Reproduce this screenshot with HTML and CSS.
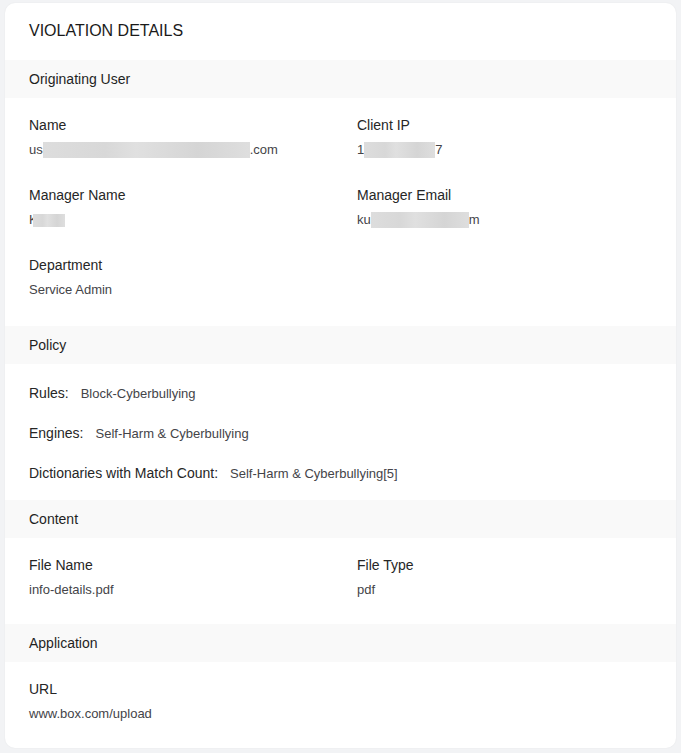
FILE: index.html
```html
<!DOCTYPE html>
<html>
<head>
<meta charset="utf-8">
<link rel="stylesheet" href="styles.css">
</head>
<body>
<div class="card">
  <div class="title">VIOLATION DETAILS</div>

  <div class="band">Originating User</div>
  <div class="section grid user">
    <div class="field">
      <div class="label">Name</div>
      <div class="value">us<span class="redact r-name"></span>.com</div>
    </div>
    <div class="field">
      <div class="label">Client IP</div>
      <div class="value">1<span class="redact r-ip"></span>7</div>
    </div>
    <div class="field">
      <div class="label">Manager Name</div>
      <div class="value">K<span class="redact r-mgr"></span></div>
    </div>
    <div class="field">
      <div class="label">Manager Email</div>
      <div class="value">ku<span class="redact r-mail"></span>m</div>
    </div>
    <div class="field">
      <div class="label">Department</div>
      <div class="value">Service Admin</div>
    </div>
  </div>

  <div class="band">Policy</div>
  <div class="section policy">
    <div class="prow"><span class="plabel">Rules:</span><span class="pvalue">Block-Cyberbullying</span></div>
    <div class="prow"><span class="plabel">Engines:</span><span class="pvalue">Self-Harm &amp; Cyberbullying</span></div>
    <div class="prow"><span class="plabel">Dictionaries with Match Count:</span><span class="pvalue">Self-Harm &amp; Cyberbullying[5]</span></div>
  </div>

  <div class="band">Content</div>
  <div class="section grid content">
    <div class="field">
      <div class="label">File Name</div>
      <div class="value">info-details.pdf</div>
    </div>
    <div class="field">
      <div class="label">File Type</div>
      <div class="value">pdf</div>
    </div>
  </div>

  <div class="band">Application</div>
  <div class="section grid app">
    <div class="field">
      <div class="label">URL</div>
      <div class="value">www.box.com/upload</div>
    </div>
  </div>
</div>
</body>
</html>
```

FILE: styles.css
```css
html, body {
  margin: 0;
  padding: 0;
  background: #f2f3f5;
}
body {
  padding: 3px 5px 5px 5px;
  font-family: Arial, "Liberation Sans", sans-serif;
}
.card {
  background: #ffffff;
  border-radius: 10px;
  overflow: hidden;
  box-shadow: 0 0 2px rgba(0,0,0,0.06);
}
.title {
  height: 57px;
  box-sizing: border-box;
  padding: 18px 24px 0 24px;
  font-size: 16px;
  line-height: 20px;
  color: #1a1a1a;
}
.band {
  height: 38px;
  line-height: 38px;
  padding: 0 24px;
  background: #f9f9f9;
  font-size: 14px;
  color: #1f1f1f;
}
.section {
  padding: 0 24px;
}
.grid {
  display: grid;
  grid-template-columns: 328px 1fr;
  row-gap: 25px;
}
.user { padding-top: 17px; padding-bottom: 26px; }
.content { padding-top: 17px; padding-bottom: 24px; }
.app { padding-top: 17px; padding-bottom: 24px; }
.label {
  font-size: 14px;
  line-height: 20px;
  height: 20px;
  color: #262626;
  margin-bottom: 5px;
}
.value {
  font-size: 13px;
  line-height: 20px;
  height: 20px;
  color: #444448;
  white-space: nowrap;
}
.redact {
  display: inline-block;
  height: 16px;
  vertical-align: -4px;
  background: linear-gradient(90deg, #dddddd 0%, #d8d8d8 30%, #e0e0e0 45%, #d5d5d5 75%, #dedede 100%);
}
.r-name { width: 207px; }
.r-ip { width: 71px; }
.r-mgr { width: 32px; margin-left: -5px; height: 13px; vertical-align: -3px; }
.r-mail { width: 98px; }
.policy {
  padding-top: 19px;
  padding-bottom: 17px;
  display: flex;
  flex-direction: column;
  gap: 20px;
}
.prow {
  display: flex;
  align-items: baseline;
  height: 20px;
  line-height: 20px;
  white-space: nowrap;
}
.plabel {
  font-size: 14px;
  color: #262626;
  margin-right: 12px;
}
.pvalue {
  font-size: 13px;
  color: #444448;
}
```
